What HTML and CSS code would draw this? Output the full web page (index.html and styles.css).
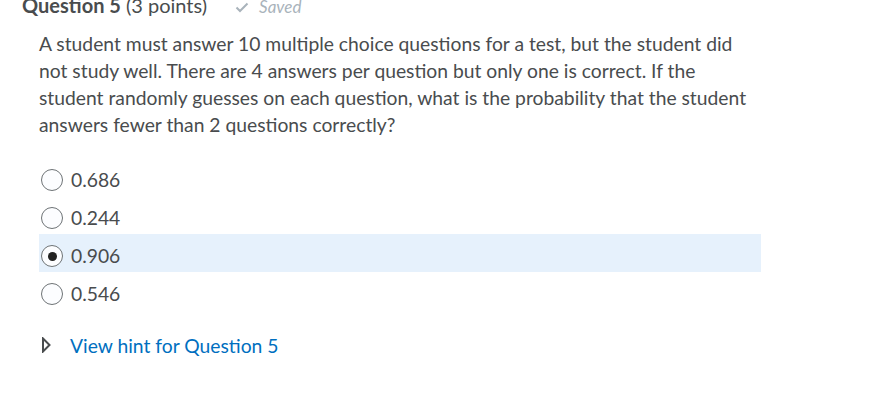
FILE: index.html
```html
<!DOCTYPE html>
<html>
<head>
<meta charset="utf-8">
<link rel="stylesheet" href="styles.css">
</head>
<body>
<div class="page">
  <div class="qhead">
    <span class="qtitle">Question 5</span>
    <span class="qpoints">(3 points)</span>
    <span class="saved">
      <svg class="check" width="14" height="11" viewBox="0 0 14 11"><path d="M1.5 5.5 L5 9 L12.5 1.5" fill="none" stroke="#a9b3bb" stroke-width="2"/></svg>
      <span class="savedtext">Saved</span>
    </span>
  </div>
  <div class="qbody">
    <p class="qtext">A student must answer 10 multiple choice questions for a test, but the student did not study well. There are 4 answers per question but only one is correct. If the student randomly guesses on each question, what is the probability that the student answers fewer than 2 questions correctly?</p>
    <div class="options">
      <div class="opt"><span class="radio"></span><span class="label">0.686</span></div>
      <div class="opt"><span class="radio"></span><span class="label">0.244</span></div>
      <div class="opt selected"><span class="radio"><span class="dot"></span></span><span class="label">0.906</span></div>
      <div class="opt"><span class="radio"></span><span class="label">0.546</span></div>
    </div>
    <div class="hint">
      <svg class="tri" width="9" height="16" viewBox="0 0 9 16"><path d="M1 1.5 L7.5 8 L1 14.5 Z" fill="none" stroke="#494c4e" stroke-width="2" stroke-linejoin="miter"/></svg>
      <a class="hintlink">View hint for Question 5</a>
    </div>
  </div>
</div>
</body>
</html>
```

FILE: styles.css
```css
html, body {
  margin: 0;
  padding: 0;
  background: #ffffff;
}
body {
  font-family: Lato, "Noto Sans", sans-serif;
  color: #494c4e;
  width: 885px;
  height: 410px;
  overflow: hidden;
}
.page {
  margin-top: -7px;
}
.qhead {
  display: flex;
  align-items: baseline;
  padding-left: 22px;
  height: 24px;
  line-height: 24px;
  margin-top: -6px;
  margin-bottom: 6px;
}
.qtitle {
  font-size: 20px;
  font-weight: 700;
  color: #494c4e;
}
.qpoints {
  font-size: 20px;
  margin-left: 5px;
  color: #494c4e;
}
.saved {
  margin-left: 28px;
  display: inline-flex;
  align-items: baseline;
  gap: 10px;
}
.savedtext {
  font-style: italic;
  font-size: 17px;
  color: #a9b3bb;
}
.qbody {
  padding-left: 39px;
  width: 722px;
}
.qtext {
  margin: 13px 0 0 0;
  font-size: 19.3px;
  line-height: 27px;
  width: 722px;
}
.options {
  margin-top: 20px;
  display: flex;
  flex-direction: column;
}
.opt {
  height: 38px;
  display: flex;
  align-items: flex-start;
  padding-top: 11px;
  box-sizing: border-box;
}
.opt.selected {
  background: #e6f1fc;
}
.radio {
  width: 22px;
  height: 22px;
  box-sizing: border-box;
  border: 1px solid #6e7376;
  border-radius: 50%;
  background: #fcfdff;
  margin-left: 2px;
  display: flex;
  align-items: center;
  justify-content: center;
  flex: none;
}
.dot {
  width: 9px;
  height: 9px;
  border-radius: 50%;
  background: #222222;
}
.label {
  font-size: 19.3px;
  line-height: 22px;
  margin-left: 8px;
}
.hint {
  margin-top: 23px;
  display: flex;
  align-items: center;
  height: 24px;
}
.tri {
  margin-left: 3px;
}
.hintlink {
  margin-left: 19px;
  font-size: 19.3px;
  color: #006fbf;
  text-decoration: none;
}
```
